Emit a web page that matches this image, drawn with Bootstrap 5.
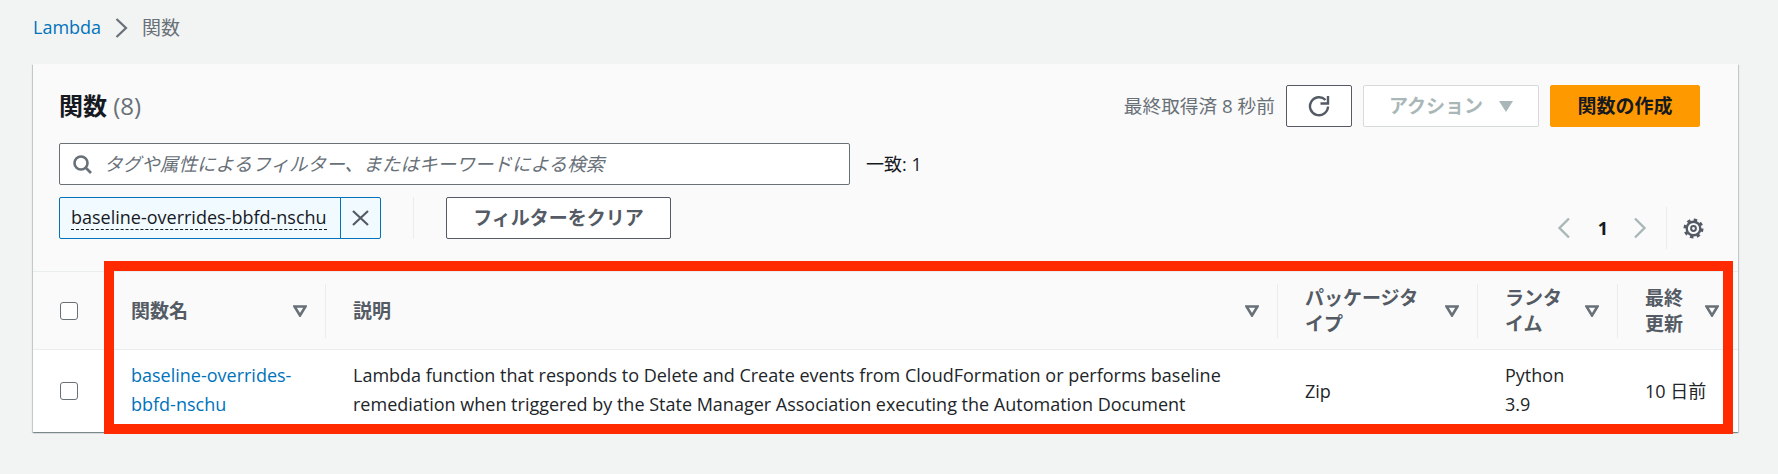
<!DOCTYPE html>
<html lang="ja">
<head>
<meta charset="utf-8">
<title>関数</title>
<link href="https://cdn.jsdelivr.net/npm/bootstrap@5.3.0/dist/css/bootstrap.min.css" rel="stylesheet">
<style>
html,body{height:100%}
body{background:#f2f3f3;font-family:"Open Sans","Noto Sans CJK JP",sans-serif;font-size:18px;color:#16191f;overflow:hidden}
.page-wrap{padding:14px 40px 0 33px;position:relative}
.crumbs{height:50px;font-size:18px;color:#687078;gap:14px}
.crumbs a{color:#0073bb;text-decoration:none}
.crumbs span{font-size:19px}
.chev-crumb{margin-top:4px}
.fn-panel{background:#fafafa;border:0;border-radius:0;height:368px;box-shadow:0 1px 1px rgba(0,28,36,.3),1px 1px 1px rgba(0,28,36,.15),-1px 1px 1px rgba(0,28,36,.15)}
.panel-head{padding:21px 38px 22px 26px}
.panel-title{font-size:24px;font-weight:700;margin:0;line-height:42px}
.panel-title span{font-weight:400;color:#687078}
.updated{color:#687078;font-size:18.700px;margin-right:11px}
.aws-btn{height:42px;border-radius:2px;border:1px solid #545b64;background:#fff;color:#545b64;font-weight:700;font-size:19px;padding:0 20px;display:inline-flex;align-items:center;justify-content:center}
.aws-btn:hover{background:#fff;color:#545b64}
.btn-refresh{width:66px;padding:0}
.btn-action{width:176px;padding:0;margin-left:11px;border-color:#d5dbdb;color:#aab7b8;gap:16px}
.btn-create{width:150px;padding:0;margin-left:11px;border-color:#ff9900;background:#ff9900;color:#16191f}
.search-row{margin-top:16px}
.search-box{width:791px;height:42px;background:#fff;border:1px solid #687078;border-radius:2px;padding:0 13px}
.search-box input{border:0;outline:0;flex:1;font-size:18.600px;font-style:italic;margin-left:12px;padding:0;color:#16191f;font-family:inherit}
.search-box input::placeholder{color:#687078;opacity:1}
.match{margin-left:16px}
.token-row{margin-top:12px}
.token{height:42px;width:322px;border:1px solid #0073bb;border-radius:2px;background:#f1faff}
.token-label{width:281px;padding:0 0 0 11px;border-right:1px solid #0073bb;display:flex;align-items:center;font-size:18px;white-space:nowrap}
.token-label span{border-bottom:1px dashed #16191f;line-height:23px}
.token-x{flex:1;display:flex;align-items:center;justify-content:center}
.vsep{width:1px;height:42px;background:#eaeded;margin:0 32px}
.btn-clear{width:225px;height:42px;padding:0}
.pager{margin-top:10px;height:42px;margin-right:-4px}
.pager-num{font-weight:700;font-size:18px;width:60px;padding-left:4px;text-align:center;color:#16191f}
.chev-next{margin-left:2px}
.pager-sep{width:1px;height:42px;background:#eaeded;margin:0 16px 0 19px}
.fn-table{table-layout:fixed;width:100%;margin:0;--bs-table-bg:transparent;border-collapse:separate;border-spacing:0}
.fn-table th,.fn-table td{padding:0;border:0;vertical-align:middle}
.fn-table thead th{border-top:1px solid #eaeded;border-bottom:1px solid #eaeded;height:79px;color:#545b64;font-weight:700;font-size:19px}
.th-in{height:54px;padding:0 18px 0 27px;border-right:1px solid #eaeded;display:flex;align-items:center;justify-content:space-between;line-height:26px}
.th-last{border-right:0;padding-right:19px}
.fn-table tbody td{background:#fff;line-height:29px;height:82px;padding:0 8px 2px 27px}
.fn-table tbody td.td-single{padding-bottom:0}
.fn-table tbody td:first-child,.fn-table thead th:first-child{padding:0 0 0 27px}
.fn-table tbody td a{color:#0073bb;text-decoration:none}
.box{display:block;width:18px;height:18px;background:#fff;border:1px solid #687078;border-radius:3px}
.red-frame{position:absolute;left:104px;top:261px;width:1629px;height:173px;border:10px solid #ff2a00;pointer-events:none}
</style>
</head>
<body>
<div class="page-wrap">
  <nav class="crumbs d-flex align-items-start">
    <a href="#" class="lh-base">Lambda</a>
    <svg class="chev-crumb" width="13" height="20" viewBox="0 0 13 20" fill="none" stroke="#687078" stroke-width="2.200"><path d="M1.500 1l9.500 9-9.500 9"/></svg>
    <span class="lh-base">関数</span>
  </nav>
  <div class="card fn-panel">
    <div class="panel-head">
      <div class="d-flex align-items-center justify-content-between">
        <h1 class="panel-title">関数 <span>(8)</span></h1>
        <div class="d-flex align-items-center">
          <span class="updated">最終取得済 8 秒前</span>
          <button class="btn aws-btn btn-refresh" aria-label="更新"><svg width="22" height="22" viewBox="0 0 22 22" fill="none" stroke="#545b64" stroke-width="2.400"><path d="M20 11.500A9 9 0 1 1 17.500 5"/><path d="M20 1v7.500h-7.500"/></svg></button>
          <button class="btn aws-btn btn-action"><span>アクション</span><svg width="14" height="11" viewBox="0 0 14 11"><path d="M0 0h14L7 11z" fill="#aab7b8"/></svg></button>
          <button class="btn aws-btn btn-create">関数の作成</button>
        </div>
      </div>
      <div class="search-row d-flex align-items-center">
        <div class="search-box d-flex align-items-center">
          <svg width="19" height="19" viewBox="0 0 19 19" fill="none" stroke="#687078" stroke-width="2.600"><circle cx="8" cy="8" r="6.500"/><path d="M12.500 12.500l5.500 5.500"/></svg>
          <input type="text" placeholder="タグや属性によるフィルター、またはキーワードによる検索" aria-label="検索">
        </div>
        <span class="match">一致: 1</span>
      </div>
      <div class="token-row d-flex align-items-start">
        <div class="token d-flex">
          <div class="token-label"><span>baseline-overrides-bbfd-nschu</span></div>
          <div class="token-x"><svg width="17" height="16" viewBox="0 0 17 16" fill="none" stroke="#545b64" stroke-width="2.200"><path d="M1 1l15 14M16 1L1 15"/></svg></div>
        </div>
        <div class="vsep"></div>
        <button class="btn aws-btn btn-clear">フィルターをクリア</button>
        <div class="pager ms-auto d-flex align-items-center">
          <svg width="14" height="22" viewBox="0 0 14 22" fill="none" stroke="#aab7b8" stroke-width="2.400"><path d="M12 1.500L2.500 11l9.500 9.500"/></svg>
          <span class="pager-num">1</span>
          <svg class="chev-next" width="14" height="22" viewBox="0 0 14 22" fill="none" stroke="#aab7b8" stroke-width="2.400"><path d="M2 1.500L11.500 11 2 20.500"/></svg>
          <span class="pager-sep"></span>
          <svg width="21" height="21" viewBox="0 0 21 21" fill="none" stroke="#545b64"><circle cx="10.500" cy="10.500" r="6.800" stroke-width="2.400"/><circle cx="10.500" cy="10.500" r="2.400" stroke-width="2"/><circle cx="10.500" cy="10.500" r="8.700" stroke-width="2.600" stroke-dasharray="3.400 3.433"/></svg>
        </div>
      </div>
    </div>
    <table class="table fn-table">
      <colgroup><col style="width:71px"><col style="width:222px"><col style="width:952px"><col style="width:200px"><col style="width:140px"><col></colgroup>
      <thead>
        <tr>
          <th><span class="box"></span></th>
          <th><div class="th-in"><span>関数名</span><svg width="14" height="12" viewBox="0 0 14 12" fill="none" stroke="#687078" stroke-width="2.600"><path d="M1.500 1.500h11L7 10.500z"/></svg></div></th>
          <th><div class="th-in"><span>説明</span><svg width="14" height="12" viewBox="0 0 14 12" fill="none" stroke="#687078" stroke-width="2.600"><path d="M1.500 1.500h11L7 10.500z"/></svg></div></th>
          <th><div class="th-in"><span>パッケージタ<br>イプ</span><svg width="14" height="12" viewBox="0 0 14 12" fill="none" stroke="#687078" stroke-width="2.600"><path d="M1.500 1.500h11L7 10.500z"/></svg></div></th>
          <th><div class="th-in"><span>ランタ<br>イム</span><svg width="14" height="12" viewBox="0 0 14 12" fill="none" stroke="#687078" stroke-width="2.600"><path d="M1.500 1.500h11L7 10.500z"/></svg></div></th>
          <th><div class="th-in th-last"><span>最終<br>更新</span><svg width="14" height="12" viewBox="0 0 14 12" fill="none" stroke="#687078" stroke-width="2.600"><path d="M1.500 1.500h11L7 10.500z"/></svg></div></th>
        </tr>
      </thead>
      <tbody>
        <tr>
          <td><span class="box"></span></td>
          <td><a href="#">baseline-overrides-<br>bbfd-nschu</a></td>
          <td>Lambda function that responds to Delete and Create events from CloudFormation or performs baseline<br>remediation when triggered by the State Manager Association executing the Automation Document</td>
          <td class="td-single">Zip</td>
          <td>Python<br>3.9</td>
          <td class="td-single">10 日前</td>
        </tr>
      </tbody>
    </table>
  </div>
  <div class="red-frame"></div>
</div>
</body>
</html>
